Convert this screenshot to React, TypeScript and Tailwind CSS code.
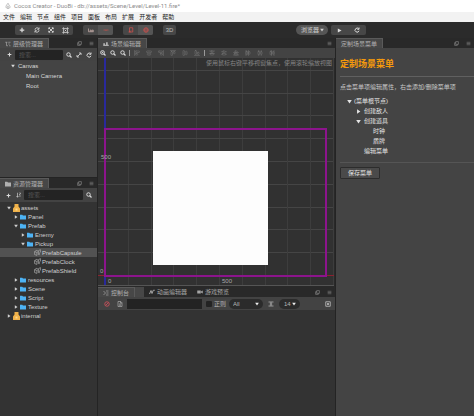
import React from "react";
import { AlignCenterHorizontal, AlignCenterVertical, AlignEndHorizontal, AlignEndVertical, AlignStartHorizontal, AlignStartVertical, AlignHorizontalDistributeCenter, AlignHorizontalDistributeEnd, AlignHorizontalDistributeStart, AlignVerticalDistributeCenter, AlignVerticalDistributeEnd, AlignVerticalDistributeStart } from "lucide-react";

type Kids = { children: React.ReactNode };

const glyphs: Record<string, React.ReactNode> = {
  plus: <path d="M12 3v18M3 12h18" strokeWidth="5" />,
  refresh: <path d="M4 11a8 8 0 0 1 14-5M20 13a8 8 0 0 1-14 5M20 2v7h-7M4 22v-7h7" strokeWidth="3.5" />,
  scale: <path d="M4 4l16 16M20 4L4 20M3 9V3h6M15 3h6v6M21 15v6h-6M9 21H3v-6" strokeWidth="3.5" />,
  rect: <path d="M5 5h14v14H5zM1 5h4V1M19 1v4h4M23 19h-4v4M5 23v-4H1M9 9l6 6M15 9l-6 6" strokeWidth="2.5" />,
  search: <><circle cx="10" cy="10" r="7" strokeWidth="4" /><path d="M15 15l7 7" strokeWidth="5" /></>,
  zoomIn: <><circle cx="10" cy="10" r="7.5" strokeWidth="4" /><path d="M15 15l7 7" strokeWidth="5" /><path d="M10 7v6M7 10h6" strokeWidth="3" /></>,
  expand: <path d="M5 19L19 5M12 4h8v8M4 12v8h8" strokeWidth="3.5" />,
  reload: <path d="M19 8a8 8 0 1 0 1 7M20 2v7h-7" strokeWidth="4" />,
  sort: <path d="M6 3v18M2 16l4 5 4-5M12 4h3M12 10h5M12 16h7M18 3v5" strokeWidth="2.5" />,
  tree: <path d="M1 5h9M6 5v14h6M13 5h9M13 12h6M16 19h6" strokeWidth="2.5" />,
  menu: <path d="M3 6h18M3 12h18M3 18h18" strokeWidth="2.5" />,
  popout: <path d="M8 3h13v13H8zM16 16v5H3V8h5" strokeWidth="3" />,
  clear: <><circle cx="12" cy="12" r="9" strokeWidth="3.5" /><path d="M6 18L18 6" strokeWidth="3.5" /></>,
  file: <path d="M4 2h11l5 5v15H4zM14 2v6h6M8 12h8M8 17h8" strokeWidth="2.5" />,
  terminal: <path d="M2 4l8 8-8 8M12 4h10M14 12h8M12 20h10" strokeWidth="2.5" />,
  curve: <path d="M2 20L8 6l4 12 5-13h6" strokeWidth="4" />,
  play: <path d="M4 2l18 10L4 22z" fill="currentColor" stroke="none" />,
  down: <path d="M1 5h22L12 21z" fill="currentColor" stroke="none" />,
  right: <path d="M5 1v22l16-11z" fill="currentColor" stroke="none" />,
  folder: <path d="M0 3h9l3 3h12v16H0z" fill="currentColor" stroke="none" />,
  scene: <path d="M1 20V9h7v6h4V5h7v10h4v5z" fill="currentColor" stroke="none" />,
  video: <path d="M1 6h14v12H1zM16 10l7-4v12l-7-4z" fill="currentColor" stroke="none" />,
  pivot: <path d="M2 6v13h20M9 19v-7h4v7M17 19v-7h4v7" strokeWidth="3" />,
  line: <path d="M2 12h20M12 12v4" strokeWidth="3" />,
  local: <path d="M6 3h13v17H6zM6 20l6-6M2 20h8" strokeWidth="3" />,
  globe: <><circle cx="12" cy="12" r="9" strokeWidth="3.5" /><path d="M3 12h18M12 3c-7 6-7 12 0 18M12 3c7 6 7 12 0 18" strokeWidth="2.5" /></>,
  textSize: <path d="M2 4h20M12 4v16M2 20h20M7 12h10" strokeWidth="3" />,
  collapse: <path d="M3 3h18v18H3zM8 8l8 8M16 8l-8 8" strokeWidth="3.5" />,
  prefab: <path d="M2 9l8-5 3 3M2 9v10l8 3V12zM10 12l5-4M15 20V6l7-4v9l-4 3M18 14v7" strokeWidth="2.5" />,
};

function Icon({ name, className = "size-[6px]" }: { name: string; className?: string }) {
  return (
    <svg viewBox="0 0 24 24" fill="none" stroke="currentColor" aria-hidden="true" className={`block shrink-0 ${className}`}>
      {glyphs[name]}
    </svg>
  );
}

function IconButton({ name, label, className = "w-[10px]", size = "size-[6px]" }: { name: string; label: string; className?: string; size?: string }) {
  return (
    <button type="button" aria-label={label} className={`flex h-[10px] shrink-0 items-center justify-center ${className}`}>
      <Icon name={name} className={size} />
    </button>
  );
}

function Tab({ icon, active = true, children }: { icon?: string; active?: boolean } & Kids) {
  return (
    <button
      type="button"
      className={`flex h-[10px] shrink-0 items-center gap-[2px] whitespace-nowrap px-[5px] ${active ? "border-t border-r border-[#5a5a5a] bg-[#474747] text-[#b0b0b0]" : "text-[#a5a5a5]"}`}
    >
      {icon && <Icon name={icon} />}
      {children}
    </button>
  );
}

function TabBar({ popout = true, children }: { popout?: boolean } & Kids) {
  return (
    <div className="flex h-[10px] shrink-0 items-center bg-[#292929]">
      {children}
      <div className="ml-auto flex gap-[2px] pr-px text-[#8a8a8a]">
        {popout && <IconButton name="popout" label="弹出面板" size="size-[5px]" />}
        <IconButton name="menu" label="面板菜单" size="size-[5px]" />
      </div>
    </div>
  );
}

const groupClass = "flex h-[10px] items-center rounded-[2px] bg-[#474747] text-[#dcdcdc]";

function TopBar() {
  return (
    <div className="flex h-4 shrink-0 items-center bg-[#2b2b2b] pl-[15px]">
      <div className={`${groupClass} w-[58px] justify-around`}>
        <IconButton name="plus" label="移动" />
        <IconButton name="refresh" label="旋转" />
        <IconButton name="scale" label="缩放" />
        <IconButton name="rect" label="矩形变换" size="size-[7px]" />
      </div>
      <div className={`${groupClass} ml-[10px] w-[30px]`}>
        <IconButton name="pivot" label="中心点" className="w-[15px] text-[#c0a8a4]" />
        <IconButton name="line" label="锚点" className="w-[15px] rounded-r-[2px] bg-[#555] text-[#b8504c]" />
      </div>
      <div className={`${groupClass} ml-[10px] w-[30px]`}>
        <IconButton name="local" label="本地坐标" className="w-[15px] text-[#d0504e]" />
        <IconButton name="globe" label="世界坐标" className="w-[15px] rounded-r-[2px] bg-[#555] text-[#c0504e]" />
      </div>
      <button type="button" className="ml-[10px] h-[10px] w-[13px] rounded-[2px] bg-[#474747] text-[#bdbdbd]">3D</button>
      <div className="relative ml-[120px] h-[10px] w-8 text-[#d0d0d0]">
        <select aria-label="预览平台" className="block size-full appearance-none rounded-full bg-[#555] pl-[5px] leading-[10px]">
          <option>浏览器</option>
        </select>
        <Icon name="down" className="pointer-events-none absolute top-[3px] right-[4px] size-1" />
      </div>
      <div className={`${groupClass} ml-[3px] h-3 w-[35px] justify-around bg-[#4d4d4d]`}>
        <IconButton name="play" label="运行" size="size-[5px]" />
        <IconButton name="reload" label="刷新" />
      </div>
    </div>
  );
}

function SearchBox() {
  return (
    <input
      type="text"
      aria-label="搜索"
      placeholder="搜索..."
      className="h-[10px] w-0 min-w-0 flex-1 rounded-[1px] bg-[#232323] px-1 text-[#ccc] placeholder:text-[#555]"
    />
  );
}

function Hierarchy() {
  return (
    <section className="flex min-h-0 flex-col border-b border-[#242424] bg-[#444]">
      <TabBar><Tab icon="tree">层级管理器</Tab></TabBar>
      <div className="flex h-[13px] shrink-0 items-center bg-[#434343] px-[3px] text-[#d8d8d8]">
        <IconButton name="plus" label="新建节点" size="size-[5px]" className="w-[12px]" />
        <SearchBox />
        <IconButton name="search" label="查找" className="w-[11px]" />
        <IconButton name="expand" label="展开" />
        <IconButton name="reload" label="刷新" />
      </div>
      <ul className="leading-[10px] text-[#d8d8d8]">
        <li>
          <button type="button" className="flex h-[10px] items-center gap-[3px] pl-[11px]"><Icon name="down" className="size-1" />Canvas</button>
          <ul className="pl-[26px]">
            <li><button type="button" className="block h-[10px]">Main Camera</button></li>
            <li><button type="button" className="block h-[10px]">Root</button></li>
          </ul>
        </li>
      </ul>
    </section>
  );
}

type Asset = { name: string; pad: string; kind: "db" | "folder" | "prefab"; open?: boolean; selected?: boolean };

const assets: Asset[] = [
  { name: "assets", pad: "pl-[7px]", kind: "db", open: true },
  { name: "Panel", pad: "pl-[14px]", kind: "folder" },
  { name: "Prefab", pad: "pl-[14px]", kind: "folder", open: true },
  { name: "Enemy", pad: "pl-[21px]", kind: "folder" },
  { name: "Pickup", pad: "pl-[21px]", kind: "folder", open: true },
  { name: "PrefabCapsule", pad: "pl-[34px]", kind: "prefab", selected: true },
  { name: "PrefabClock", pad: "pl-[34px]", kind: "prefab" },
  { name: "PrefabShield", pad: "pl-[34px]", kind: "prefab" },
  { name: "resources", pad: "pl-[14px]", kind: "folder" },
  { name: "Scene", pad: "pl-[14px]", kind: "folder" },
  { name: "Script", pad: "pl-[14px]", kind: "folder" },
  { name: "Texture", pad: "pl-[14px]", kind: "folder" },
  { name: "internal", pad: "pl-[7px]", kind: "db" },
];

function AssetIcon({ kind }: { kind: Asset["kind"] }) {
  if (kind === "db")
    return (
      <svg viewBox="0 0 14 16" aria-hidden="true" className="h-2 w-[7px] shrink-0">
        <path d="M3 0h8v5l3 4v7H0V9l3-4z" fill="#f0b24a" />
        <path d="M5 9h4v4H5z" fill="#ffd98c" />
      </svg>
    );
  if (kind === "folder") return <Icon name="folder" className="size-[6px] text-[#4db3f5]" />;
  return <Icon name="prefab" className="size-[7px] text-[#a5a5a5]" />;
}

function Assets() {
  return (
    <section className="flex min-h-0 flex-col bg-[#333]">
      <TabBar><Tab icon="folder">资源管理器</Tab></TabBar>
      <div className="flex h-[14px] shrink-0 items-center bg-[#434343] px-[3px] text-[#d8d8d8]">
        <IconButton name="plus" label="新建资源" size="size-[5px]" />
        <IconButton name="sort" label="排序" className="w-[11px]" />
        <SearchBox />
        <IconButton name="search" label="查找" className="w-[11px]" />
      </div>
      <ul className="pt-px text-[#d0d0d0]">
        {assets.map((a) => (
          <li key={a.name} className={a.selected ? "bg-[#525252]" : ""}>
            <button type="button" className={`flex h-[9px] w-full items-center ${a.pad}`}>
              {a.kind !== "prefab" && (
                <span className="flex w-[6px] shrink-0"><Icon name={a.open ? "down" : "right"} className="size-1" /></span>
              )}
              <AssetIcon kind={a.kind} />
              <span className={a.kind === "folder" ? "pl-[2px]" : "pl-px"}>{a.name}</span>
            </button>
          </li>
        ))}
      </ul>
    </section>
  );
}

const alignTools = [
  AlignStartVertical, AlignCenterVertical, AlignEndVertical, AlignStartHorizontal, AlignCenterHorizontal, AlignEndHorizontal,
  AlignVerticalDistributeStart, AlignVerticalDistributeCenter, AlignVerticalDistributeEnd,
  AlignHorizontalDistributeStart, AlignHorizontalDistributeCenter, AlignHorizontalDistributeEnd,
];

const steps = Array.from({ length: 60 }, (_, i) => i - 10);

function SceneView() {
  return (
    <section className="flex min-h-0 flex-col bg-[#292929]">
      <TabBar popout={false}><Tab icon="scene">场景编辑器</Tab></TabBar>
      <div className="flex h-[10px] shrink-0 items-center overflow-hidden bg-[#434343] text-[#777]">
        <div className="flex text-[#d8d8d8]">
          <IconButton name="zoomIn" label="放大" />
          <IconButton name="search" label="缩小" />
          <IconButton name="search" label="适应窗口" />
        </div>
        {alignTools.map((Tool, i) => (
          <React.Fragment key={i}>
            {i % 6 === 0 && <span className="mx-px h-[6px] w-px shrink-0 bg-[#999]" />}
            <button type="button" aria-label={`对齐 ${i + 1}`} className="flex w-3 shrink-0 justify-center"><Tool size={6} /></button>
          </React.Fragment>
        ))}
      </div>
      <div className="relative mr-px min-h-0 flex-1 overflow-hidden border-b border-[#555] bg-[#313131]">
        <svg className="absolute inset-0 size-full" aria-label="场景画布">
          {steps.map((i) => (
            <g key={i}>
              <path d={`M${7.5 + Math.round(i * 22.8)} 0V1000`} stroke="#3d3d3d" />
              <path d={`M0 ${217.5 - Math.round(i * 22.8)}H2000`} stroke="#454545" />
            </g>
          ))}
          <path d="M0 217.5H2000" stroke="#8c2230" />
          <path d="M7 0V1000" stroke="#29299c" strokeWidth="2" />
          <rect x="55" y="93" width="115" height="114" fill="#fdfdfd" />
          <rect x="7" y="71" width="221" height="147" fill="none" stroke="#8c148c" strokeWidth="2" />
          <g fill="#a8a8a8" fontSize="6">
            <text x="3" y="101">500</text>
            <text x="2" y="215">0</text>
            <text x="10" y="225">0</text>
            <text x="124" y="225">500</text>
          </g>
        </svg>
        <p className="relative whitespace-nowrap pt-px pr-[2px] text-right leading-2 text-[#858585]">使用鼠标右键平移视窗焦点，使用滚轮缩放视图</p>
      </div>
      <div className="h-px shrink-0" />
    </section>
  );
}

function ConsolePanel() {
  return (
    <section className="flex min-h-0 flex-col bg-[#333]">
      <TabBar>
        <div className="flex w-[46px] bg-[#474747]"><Tab icon="terminal">控制台</Tab></div>
        <Tab icon="curve" active={false}>动画编辑器</Tab>
        <Tab icon="video" active={false}>游戏预览</Tab>
      </TabBar>
      <div className="flex h-[13px] shrink-0 items-center bg-[#434343] pl-[3px] pr-[2px] text-[#b5b5b5]">
        <IconButton name="clear" label="清空" className="w-[12px] text-[#c8505a]" />
        <IconButton name="file" label="打开日志" className="w-[14px]" />
        <input type="text" aria-label="过滤" className="h-[10px] w-[75px] bg-[#232323] px-[2px]" />
        <label className="ml-1 flex items-center gap-[2px] whitespace-nowrap">
          <input type="checkbox" className="size-[6px] appearance-none rounded-[1px] bg-[#232323] checked:bg-[#888]" />正则
        </label>
        <div className="relative ml-[3px] h-[10px] w-[34px]">
          <select aria-label="日志类型" className="block size-full appearance-none rounded-full bg-[#2b2b2b] pl-1 leading-[10px]"><option>All</option></select>
          <Icon name="down" className="pointer-events-none absolute top-[3px] right-[4px] size-1 text-[#eee]" />
        </div>
        <Icon name="textSize" className="mx-[5px] size-[6px]" />
        <div className="relative h-[10px] w-[21px]">
          <select aria-label="字号" className="block size-full appearance-none rounded-full bg-[#2b2b2b] pl-[5px] leading-[10px]"><option>14</option></select>
          <Icon name="down" className="pointer-events-none absolute top-[3px] right-[4px] size-1 text-[#eee]" />
        </div>
        <IconButton name="collapse" label="合并" className="ml-auto w-[10px]" />
      </div>
    </section>
  );
}

function MenuPanel() {
  return (
    <section className="flex min-h-0 min-w-0 flex-col bg-[#444]">
      <TabBar><Tab>定制场景菜单</Tab></TabBar>
      <div className="pl-1 text-[#c8c8c8]">
        <h2 className="pt-[10px] text-[9px] leading-3 font-bold text-[#f59a0c]">定制场景菜单</h2>
        <hr className="mt-[6px] border-[#606060]" />
        <p className="mt-[6px] whitespace-nowrap leading-[8px]">点击菜单项编辑属性，右击添加/删除菜单项</p>
        <ul className="mt-[5px] pl-[7px] leading-[10px] text-[#e4e4e4]">
          <li>
            <button type="button" className="flex h-[10px] items-center gap-[2px]"><Icon name="down" className="size-[5px]" />(菜单根节点)</button>
            <ul className="pl-[9px]">
              <li><button type="button" className="flex h-[10px] items-center gap-[3px]"><Icon name="right" className="size-[5px]" />创建敌人</button></li>
              <li>
                <button type="button" className="flex h-[10px] items-center gap-[3px]"><Icon name="down" className="size-[5px]" />创建道具</button>
                <ul className="pl-[17px]">
                  <li><button type="button" className="block h-[10px]">时钟</button></li>
                  <li><button type="button" className="block h-[10px]">盾牌</button></li>
                </ul>
              </li>
              <li><button type="button" className="block h-[10px] pl-2">编辑菜单</button></li>
            </ul>
          </li>
        </ul>
        <hr className="mt-[6px] border-[#555]" />
        <button type="button" className="mt-1 block h-3 w-10 rounded-[1px] border border-[#2c2c2c] bg-[#4a4a4a] text-[#e0e0e0]">保存菜单</button>
      </div>
    </section>
  );
}

const menus = ["文件", "编辑", "节点", "组件", "项目", "面板", "布局", "扩展", "开发者", "帮助"];

export default function App() {
  return (
    <div lang="zh-CN" className="flex h-screen flex-col overflow-hidden bg-[#242424] font-['Liberation_Sans','Noto_Sans_CJK_SC',sans-serif] text-[6px] leading-2">
      <header className="flex h-3 shrink-0 items-center gap-[3px] bg-white pl-[5px] text-[#8c8c8c]">
        <svg viewBox="0 0 24 24" fill="none" stroke="#aaa" strokeWidth="3" aria-hidden="true" className="size-[6px]">
          <path d="M12 1C8 7 3 10 4 17c2 7 14 7 16 0 1-6-5-8-8-16zM9 20c-1-5 2-6 3-9 1 3 4 5 3 9" />
        </svg>
        <h1 className="whitespace-nowrap font-[Roboto,sans-serif]">Cocos Creator - DuoBi - db://assets/Scene/Level/Level-11.fire*</h1>
      </header>
      <nav className="flex h-[10px] shrink-0 items-center gap-[5px] bg-[#f2f2f2] pl-[3px] text-[#222]">
        {menus.map((m) => <button type="button" key={m} className="whitespace-nowrap">{m}</button>)}
      </nav>
      <TopBar />
      <main className="grid min-h-0 flex-1 grid-cols-[97fr_237fr_138fr] gap-px">
        <div className="grid min-h-0 min-w-0 grid-rows-[140fr_238fr]"><Hierarchy /><Assets /></div>
        <div className="grid min-h-0 min-w-0 grid-rows-[249fr_129fr]"><SceneView /><ConsolePanel /></div>
        <MenuPanel />
      </main>
    </div>
  );
}
